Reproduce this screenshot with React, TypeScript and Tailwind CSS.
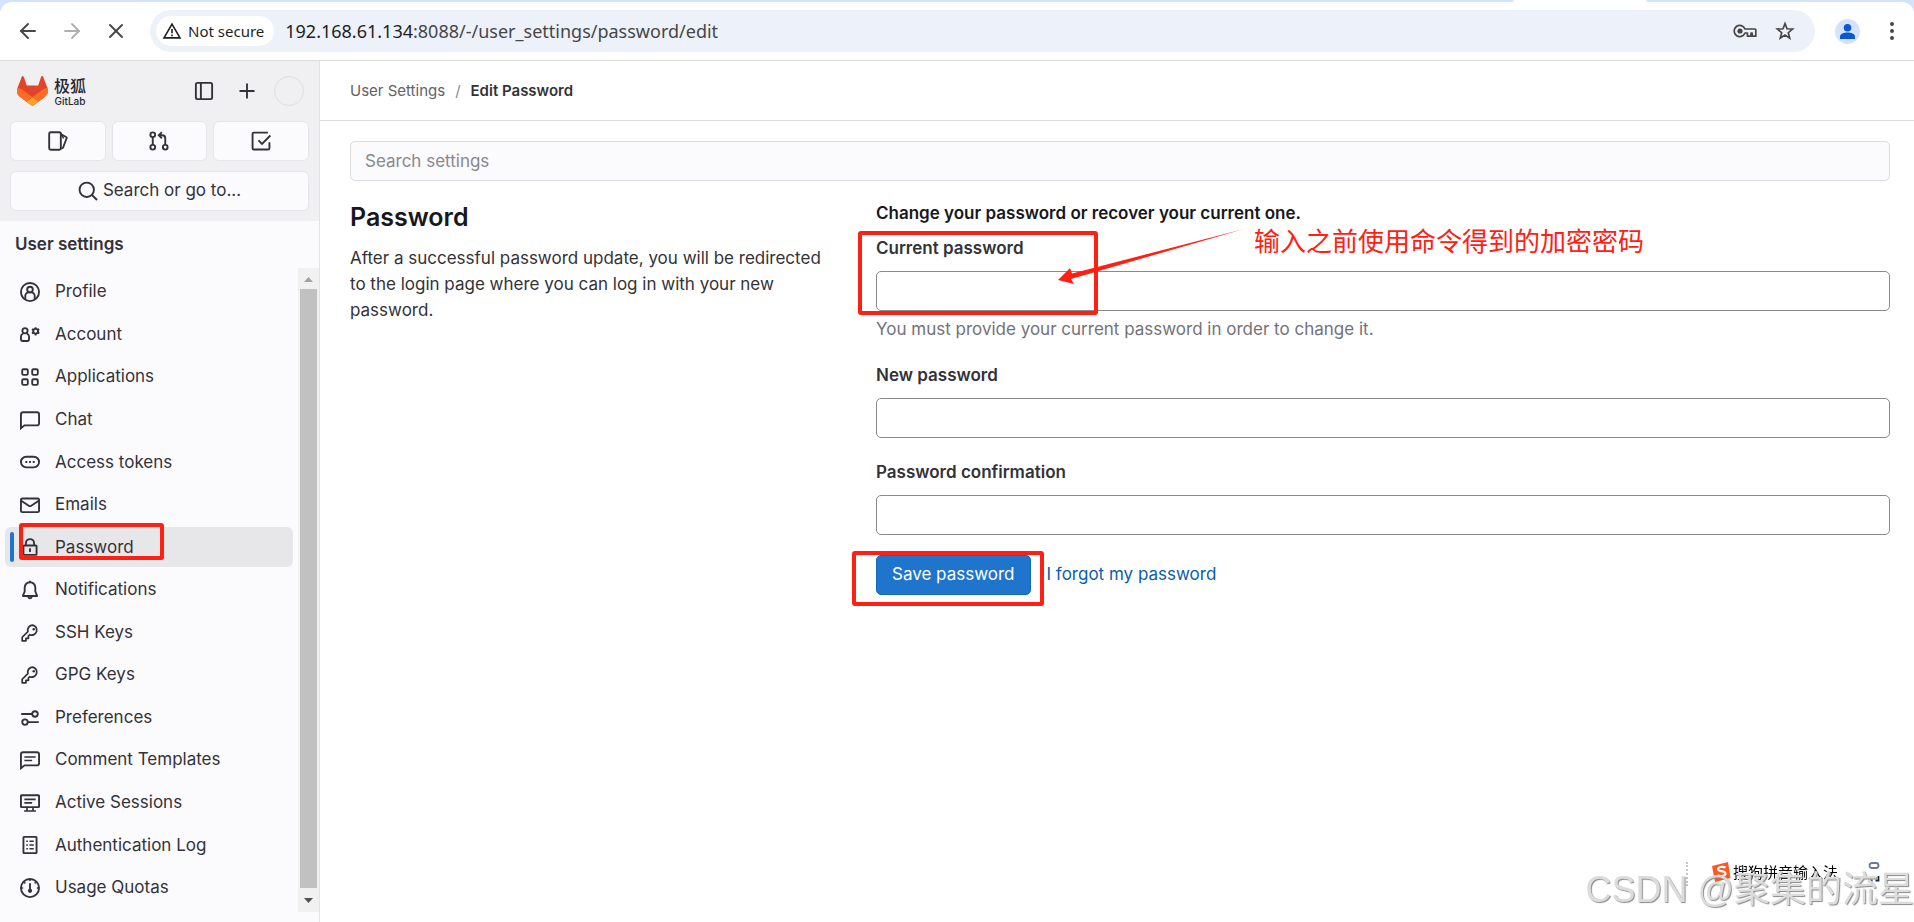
import { ReactNode } from "react";
import { ArrowLeft, ArrowRight, X } from "lucide-react";

interface NavItem {
  label: string;
  icon: ReactNode;
  active?: boolean;
}

function Icon({ children, className = "w-5 h-5" }: { children: ReactNode; className?: string }) {
  return (
    <svg
      viewBox="0 0 16 16"
      fill="none"
      stroke="currentColor"
      strokeWidth="1.5"
      className={`shrink-0 ${className}`}
      aria-hidden="true"
    >
      {children}
    </svg>
  );
}

const keyIcon = (
  <Icon>
    <path
      d="M10.2 1.75a4 4 0 0 0-3.9 5.1L1.75 11.4v2.85h3v-2h2v-2l1.1-.9a4 4 0 1 0 2.35-7.6Z"
      strokeLinejoin="round"
      strokeWidth="1.4"
    />
    <circle cx="11" cy="5" r="1" fill="currentColor" stroke="none" />
  </Icon>
);

const navItems: NavItem[] = [
  {
    label: "Profile",
    icon: (
      <Icon>
        <circle cx="8" cy="8" r="7.25" />
        <circle cx="8" cy="6" r="2.25" />
        <path d="M4.25 13.7V11a2.75 2.75 0 0 1 2.75-2.75h2A2.75 2.75 0 0 1 11.75 11v2.7" />
      </Icon>
    ),
  },
  {
    label: "Account",
    icon: (
      <Icon>
        <circle cx="4" cy="4.6" r="2.1" />
        <path d="M2.5 6.9A2.6 2.6 0 0 0 .75 9.3v1.9c0 .9.6 1.55 1.5 1.55h3.5c.9 0 1.5-.65 1.5-1.55V9.3A2.6 2.6 0 0 0 5.5 6.9" />
        <circle cx="12.5" cy="5" r="1.9" />
        <path d="M12.5 1.7v1.4M12.5 6.9v1.4M9.6 3.3l1.3.8M14.1 5.9l1.3.8M15.4 3.3l-1.3.8M10.9 5.9l-1.3.8" />
      </Icon>
    ),
  },
  {
    label: "Applications",
    icon: (
      <Icon>
        <rect x="1.75" y="1.75" width="4.5" height="4.5" rx="1" />
        <rect x="9.75" y="1.75" width="4.5" height="4.5" rx="1" />
        <rect x="1.75" y="9.75" width="4.5" height="4.5" rx="1" />
        <rect x="9.75" y="9.75" width="4.5" height="4.5" rx="1" />
      </Icon>
    ),
  },
  {
    label: "Chat",
    icon: (
      <Icon>
        <path d="M.75 14.6V3.5c0-1 .75-1.75 1.75-1.75h11c1 0 1.75.75 1.75 1.75v7c0 1-.75 1.75-1.75 1.75H3.6L.75 14.6Z" />
      </Icon>
    ),
  },
  {
    label: "Access tokens",
    icon: (
      <Icon>
        <rect x=".75" y="3.75" width="14.5" height="8.5" rx="4.25" />
        <path d="M4.3 8h1.5M7.25 8h1.5M10.2 8h1.5" />
      </Icon>
    ),
  },
  {
    label: "Emails",
    icon: (
      <Icon>
        <rect x=".75" y="2.75" width="14.5" height="10.9" rx="1.25" />
        <path d="M1 4.6 7 8.6a1.8 1.8 0 0 0 2 0l6-4" />
      </Icon>
    ),
  },
  {
    label: "Password",
    active: true,
    icon: (
      <Icon>
        <path d="M4.75 6.5V4.9a3.25 3.25 0 0 1 6.5 0v1.6" />
        <rect x="2.75" y="6.75" width="10.5" height="7.5" rx=".5" />
        <path d="M8 9v3" />
      </Icon>
    ),
  },
  {
    label: "Notifications",
    icon: (
      <Icon>
        <path
          d="M8 1.75a4.25 4.25 0 0 0-4.25 4.25v3.2L2.3 12.75h11.4L12.25 9.2V6A4.25 4.25 0 0 0 8 1.75Z"
          strokeLinejoin="round"
        />
        <path d="M8 .5v1.2M6.6 13.6a1.45 1.45 0 0 0 2.8 0" />
      </Icon>
    ),
  },
  { label: "SSH Keys", icon: keyIcon },
  { label: "GPG Keys", icon: keyIcon },
  {
    label: "Preferences",
    icon: (
      <Icon>
        <circle cx="12" cy="4.75" r="2.2" />
        <circle cx="4" cy="11.25" r="2.2" />
        <path d="M1 4.75h8.8M6.2 11.25H15" />
      </Icon>
    ),
  },
  {
    label: "Comment Templates",
    icon: (
      <Icon>
        <path d="M.75 14.6V3.5c0-1 .75-1.75 1.75-1.75h11c1 0 1.75.75 1.75 1.75v7c0 1-.75 1.75-1.75 1.75H3.6L.75 14.6Z" />
        <path d="M3.5 5.6h9M3.5 8.4h6.2" strokeWidth="1.3" />
      </Icon>
    ),
  },
  {
    label: "Active Sessions",
    icon: (
      <Icon>
        <rect x=".75" y="1.75" width="14.5" height="9.5" rx=".5" />
        <path d="M3.5 5.1h9M3.5 7.9h6.2" strokeWidth="1.3" />
        <path d="M5.6 11.3v2.9M10.4 11.3v2.9M3.3 14.4h9.4" strokeWidth="1.3" />
      </Icon>
    ),
  },
  {
    label: "Authentication Log",
    icon: (
      <Icon>
        <rect x="2.75" y="1.5" width="10.5" height="13" rx=".5" />
        <path d="M5 5h1.3M7.6 5H11M5 8h1.3M7.6 8H11M5 11h1.3M7.6 11H11" strokeWidth="1.3" />
      </Icon>
    ),
  },
  {
    label: "Usage Quotas",
    icon: (
      <Icon>
        <circle cx="8" cy="8" r="7.25" />
        <path d="M8 4.2v5" />
        <circle cx="8" cy="10.2" r="1.7" fill="currentColor" stroke="none" />
        <path d="M8 1v1.4M3.4 3.4l.9.9M12.6 3.4l-.9.9M1 8h1.5M13.5 8H15" strokeWidth="1.2" />
      </Icon>
    ),
  },
];

function BrowserBar() {
  return (
    <header className="shrink-0 bg-[#d3e3fd]">
      <div className="flex h-[2px] justify-end">
        <div className="mr-[267px] h-full w-[134px] rounded-t-sm bg-white" />
      </div>
      <div className="flex h-[59px] items-center rounded-t-xl border-b border-[#dcdcdc] bg-white pl-4 pr-3 text-[#474747]">
        <button aria-label="Back">
          <ArrowLeft className="h-6 w-6" strokeWidth={1.9} />
        </button>
        <button aria-label="Forward" className="ml-5 text-[#b0b0b0]">
          <ArrowRight className="h-6 w-6" strokeWidth={1.9} />
        </button>
        <button aria-label="Stop" className="ml-5">
          <X className="h-6 w-6" strokeWidth={1.9} />
        </button>
        <div className="ml-[22px] flex h-[42px] flex-1 items-center rounded-full bg-[#ecf1fa] pl-[6px] pr-5 font-['Noto_Sans',sans-serif]">
          <button className="flex h-[30px] items-center gap-[6px] rounded-full bg-white pl-[6px] pr-[10px] text-[15px] text-[#1f1f1f]">
            <svg viewBox="0 0 20 20" className="h-5 w-5" fill="none" stroke="currentColor" strokeWidth="1.6">
              <path d="M10 3.2 18 16.9H2L10 3.2Z" />
              <path d="M10 8v4.2M10 13.6v1.7" />
            </svg>
            Not secure
          </button>
          <span className="ml-[11px] flex-1 text-[18px] text-[#474747]">
            <span className="text-[#1f1f1f]">192.168.61.134</span>:8088/-/user_settings/password/edit
          </span>
          <button aria-label="Manage passwords">
            <svg viewBox="0 0 24 14" className="h-[14px] w-6" fill="none" stroke="currentColor" strokeWidth="1.7">
              <path d="M12 5H22a.8.8 0 0 1 .8.8V12.2h-3.6V9h-1.2v3.2h-3.6V9H12a5.6 5.6 0 1 1 0-4Z" strokeLinejoin="round" />
              <circle cx="7" cy="7" r="2.6" fill="currentColor" stroke="none" />
            </svg>
          </button>
          <button aria-label="Bookmark" className="ml-[18px]">
            <svg viewBox="0 0 20 20" className="h-5 w-5" fill="none" stroke="currentColor" strokeWidth="1.7">
              <path d="m10 2.6 2 5.2 5.6.3-4.3 3.6 1.4 5.5L10 14.1l-4.7 3.1 1.4-5.5-4.3-3.6 5.6-.3 2-5.2Z" />
            </svg>
          </button>
        </div>
        <button aria-label="Account" className="ml-5">
          <svg viewBox="0 0 25 25" className="h-[25px] w-[25px]">
            <circle cx="12.5" cy="12.5" r="12.5" fill="#d3e3fd" />
            <circle cx="12.5" cy="8.7" r="3.8" fill="#0b57d0" />
            <path d="M5 20v-2.2c0-3 4-4.3 7.5-4.3s7.5 1.3 7.5 4.3V20Z" fill="#0b57d0" />
          </svg>
        </button>
        <button aria-label="Menu" className="ml-[22px]">
          <svg viewBox="0 0 20 20" className="h-5 w-5" fill="currentColor">
            <circle cx="10" cy="3" r="2" />
            <circle cx="10" cy="10" r="2" />
            <circle cx="10" cy="17" r="2" />
          </svg>
        </button>
      </div>
    </header>
  );
}

function Logo() {
  return (
    <a href="#" className="flex items-center gap-[6px] text-[#28272d]">
      <svg viewBox="0 0 25 24" className="h-[30px] w-[31px]">
        <path
          d="m24.507 9.5-.034-.09L21.082.562a.896.896 0 0 0-1.694.091l-2.29 7.01H7.825L5.535.653a.898.898 0 0 0-1.694-.09L.451 9.411.416 9.5a6.297 6.297 0 0 0 2.09 7.278l.012.01.03.022 5.16 3.867 2.56 1.935 1.554 1.176a1.051 1.051 0 0 0 1.268 0l1.555-1.176 2.56-1.935 5.197-3.89.014-.01A6.297 6.297 0 0 0 24.507 9.5Z"
          fill="#E24329"
        />
        <path
          d="m24.507 9.5-.034-.09a11.44 11.44 0 0 0-4.56 2.051l-7.447 5.632 4.742 3.584 5.197-3.89.014-.01A6.297 6.297 0 0 0 24.507 9.5Z"
          fill="#FC6D26"
        />
        <path
          d="m7.707 20.677 2.56 1.935 1.555 1.176a1.051 1.051 0 0 0 1.268 0l1.555-1.176 2.56-1.935-4.743-3.584-4.755 3.584Z"
          fill="#FCA326"
        />
        <path
          d="M5.01 11.461a11.43 11.43 0 0 0-4.56-2.05L.416 9.5a6.297 6.297 0 0 0 2.09 7.278l.012.01.03.022 5.16 3.867 4.745-3.584-7.444-5.632Z"
          fill="#FC6D26"
        />
      </svg>
      <span className="flex flex-col items-center">
        <span className="font-['Noto_Sans_CJK_SC',sans-serif] text-[16px] font-medium leading-5">极狐</span>
        <span className="text-[10px] font-medium leading-3">GitLab</span>
      </span>
    </a>
  );
}

function Sidebar() {
  return (
    <aside className="flex w-80 shrink-0 flex-col border-r border-[#e3e3e6] bg-[#fbfafd] text-[#333238]">
      <div className="bg-[#f0eff2] px-[10px] pb-[10px] pt-[15px]">
        <div className="flex h-[30px] items-center pl-[7px] pr-[5px]">
          <Logo />
          <button aria-label="Toggle sidebar" className="ml-auto">
            <Icon>
              <rect x="1.5" y="1.5" width="13" height="13" rx="1.25" />
              <path d="M5.5 1.5v13" />
            </Icon>
          </button>
          <button aria-label="Create new" className="ml-[23px]">
            <Icon>
              <path d="M8 2v12M2 8h12" />
            </Icon>
          </button>
          <button aria-label="User menu" className="ml-[17px] h-[30px] w-[30px] rounded-full border border-[#dfdee2]" />
        </div>
        <div className="mt-[15px] grid grid-cols-3 gap-[6px]">
          <button aria-label="Issues" className="flex h-10 items-center justify-center rounded-md border border-[#e6e5e9] bg-[#fbfafd]">
            <Icon>
              <rect x=".95" y="1" width="9.3" height="14" rx="1.2" />
              <path d="m10.5 2.6 4 2.2a.8.8 0 0 1 .4 1L12 13.4l-1.7.8" strokeLinejoin="round" />
              <path d="M10.3 1.6 12.5 6" strokeWidth="1.2" />
            </Icon>
          </button>
          <button aria-label="Merge requests" className="flex h-10 items-center justify-center rounded-md border border-[#e6e5e9] bg-[#fbfafd]">
            <Icon>
              <circle cx="3" cy="3" r="1.9" />
              <circle cx="3" cy="13" r="1.9" />
              <circle cx="13" cy="13" r="1.9" />
              <path d="M3 5v6M13 11V6c0-1.5-1-2.6-2.5-2.6H8.2M10.3.9 7.8 3.4l2.5 2.5" />
            </Icon>
          </button>
          <button aria-label="To-do list" className="flex h-10 items-center justify-center rounded-md border border-[#e6e5e9] bg-[#fbfafd]">
            <Icon>
              <path d="M13.5 1.25H2.25c-.6 0-1 .4-1 1v11.5c0 .6.4 1 1 1h11.5c.6 0 1-.4 1-1V9" />
              <path d="m6 7.5 2.8 2.8 6.7-6.7" />
            </Icon>
          </button>
        </div>
        <button className="mt-[10px] flex h-10 w-full items-center justify-center gap-[5px] rounded-md border border-[#e6e5e9] bg-[#fbfafd] text-[17px]">
          <Icon>
            <circle cx="7" cy="7" r="5.75" />
            <path d="m11.2 11.2 4 4" />
          </Icon>
          Search or go to...
        </button>
      </div>
      <h2 className="px-[15px] pt-3 text-[17px] font-semibold leading-[22px]">User settings</h2>
      <div className="mb-[10px] mt-[13px] flex flex-1">
        <nav aria-label="User settings" className="flex-1 px-[5px] py-1">
          <ul className="flex h-full flex-col justify-between">
            {navItems.map((item) => (
              <li key={item.label} className="relative">
                <a
                  href="#"
                  aria-current={item.active ? "page" : undefined}
                  className={`flex h-10 items-center rounded-md pl-[5px] text-[17px] ${item.active ? "bg-[#e7e7e9]" : ""}`}
                >
                  <span className={`mr-[6px] h-[30px] w-1 rounded-sm ${item.active ? "bg-[#1f75cb]" : ""}`} />
                  {item.icon}
                  <span className="ml-[15px]">{item.label}</span>
                </a>
                {item.active && (
                  <div className="absolute -top-1 left-[14px] h-[37px] w-[145px] rounded-[3px] border-4 border-[#ff2014]" />
                )}
              </li>
            ))}
          </ul>
        </nav>
        <div className="flex w-[21px] flex-col items-center bg-[#f1f1f1]" aria-hidden="true">
          <svg viewBox="0 0 21 21" className="h-[21px] w-[21px]" fill="#a3a3a3">
            <path d="M6 14h9l-4.5-5Z" />
          </svg>
          <div className="w-[17px] flex-1 bg-[#c1c1c1]" />
          <svg viewBox="0 0 21 24" className="h-6 w-[21px]" fill="#505050">
            <path d="M6 10h9l-4.5 5Z" />
          </svg>
        </div>
      </div>
    </aside>
  );
}

function PasswordField({ id, label, help }: { id: string; label: string; help?: string }) {
  return (
    <div className="mb-[23px]">
      <label htmlFor={id} className="block text-[17px] font-semibold leading-[22px] text-[#333238]">
        {label}
      </label>
      <input
        id={id}
        type="password"
        className="mt-3 block h-10 w-full rounded-[5px] border border-[#89888d] bg-white px-[15px] text-[17px]"
      />
      {help && <p className="mt-[6px] text-[17px] leading-6 text-[#737278]">{help}</p>}
    </div>
  );
}

function Annotation() {
  return (
    <>
      <div className="absolute -left-[18px] -top-[6px] h-[84px] w-60 rounded-[3px] border-4 border-[#ff2014]" />
      <svg viewBox="0 0 186 56" className="absolute -top-2 left-[182px] h-14 w-[186px]" fill="#ff2014">
        <path d="M186 0 14 44.5 12 39 0 51 16 55 13 50Z" />
      </svg>
      <p className="absolute -top-3 left-[378px] whitespace-nowrap font-['Noto_Sans_CJK_SC',sans-serif] text-[26px] leading-[30px] text-[#ff2014]">
        输入之前使用命令得到的加密密码
      </p>
    </>
  );
}

function Watermark() {
  return (
    <div className="fixed bottom-0 right-0 h-[60px] w-[340px]">
      <div className="absolute left-[112px] top-0 h-6 border-l-2 border-dotted border-[#c4c4c4]" />
      <div className="absolute left-[137px] top-0 flex items-center gap-[2px]">
        <svg viewBox="0 0 20 20" className="h-5 w-5">
          <path d="M1 4 17 0l2.500 16L4 20Z" fill="#fb5a1e" />
          <path
            d="M14.5 5.5c-3-1.200-7.500-.6-7.500 1.700 0 2.600 7.500 1.200 7.500 4.200 0 2.800-5 3.200-8 1.800"
            fill="none"
            stroke="#fff"
            strokeWidth="2.2"
          />
        </svg>
        <span className="font-['Noto_Sans_CJK_SC',sans-serif] text-[15px] leading-5 text-black">搜狗拼音输入法</span>
      </div>
      <svg viewBox="0 0 12 22" className="absolute left-[294px] top-0 h-[22px] w-3" fill="none" strokeWidth="1.8">
        <rect x="1.5" y="1" width="9" height="5" rx="2.5" stroke="#6b7a90" />
        <path d="M1.5 14v4.500h3M7.500 18.500h3V14" stroke="#1c2c4c" />
      </svg>
      <p className="absolute bottom-3 right-0 whitespace-nowrap font-['Liberation_Sans','Noto_Sans_CJK_SC',sans-serif] text-[36px] leading-10 text-[#dcdcdc] [text-shadow:1px_1px_1px_#8a8a8a]">
        CSDN @聚集的流星
      </p>
    </div>
  );
}

export default function App() {
  return (
    <div className="flex min-h-screen flex-col bg-white font-['Inter',sans-serif] text-[17px] text-[#333238]">
      <BrowserBar />
      <div className="flex flex-1">
        <Sidebar />
        <main className="min-w-0 flex-1">
          <nav
            aria-label="Breadcrumb"
            className="flex h-[60px] items-center gap-[10px] border-b border-[#dcdcde] px-[30px] pt-[2px] text-[15px]"
          >
            <a href="#" className="text-[#626168]">User Settings</a>
            <span className="text-[#89888d]">/</span>
            <a href="#" aria-current="page" className="font-semibold">Edit Password</a>
          </nav>
          <div className="pb-6 pl-[30px] pr-6 pt-5">
            <input
              type="search"
              aria-label="Search settings"
              placeholder="Search settings"
              className="block h-10 w-full rounded-[5px] border border-[#dcdcde] bg-[#fbfafd] px-[14px] text-[17px] placeholder:text-[#89888d]"
            />
            <div className="mt-5 grid grid-cols-3 gap-[38px]">
              <section>
                <h1 className="text-[25px] font-semibold leading-8 text-[#18171d]">Password</h1>
                <p className="mt-3 leading-[26px]">
                  After a successful password update, you will be redirected to the login page where you can log in with
                  your new password.
                </p>
              </section>
              <form className="col-span-2">
                <p className="mb-3 font-semibold leading-6 text-[#18171d]">
                  Change your password or recover your current one.
                </p>
                <div className="relative">
                  <PasswordField
                    id="current"
                    label="Current password"
                    help="You must provide your current password in order to change it."
                  />
                  <Annotation />
                </div>
                <PasswordField id="new" label="New password" />
                <PasswordField id="confirm" label="Password confirmation" />
                <div className="relative -mt-[3px] flex items-center gap-4">
                  <button
                    type="button"
                    className="h-10 rounded-[5px] border border-[#1068bf] bg-[#1f75cb] px-[15px] text-[17px] text-white"
                  >
                    Save password
                  </button>
                  <a href="#" className="text-[#0b5cad]">I forgot my password</a>
                  <div className="absolute -left-6 -top-1 h-[55px] w-48 rounded-[3px] border-4 border-[#ff2014]" />
                </div>
              </form>
            </div>
          </div>
        </main>
      </div>
      <Watermark />
    </div>
  );
}
